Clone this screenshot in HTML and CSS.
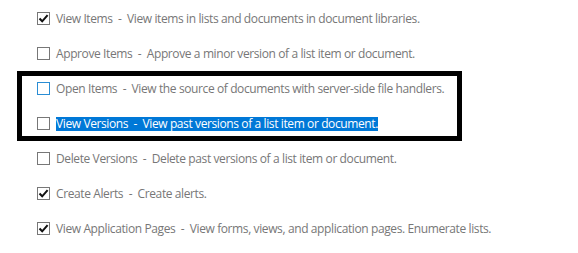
FILE: index.html
```html
<!DOCTYPE html>
<html>
<head>
<meta charset="utf-8">
<link rel="stylesheet" href="styles.css">
</head>
<body>
<div class="perm-list">
  <div class="row">
    <span class="cb checked"><svg viewBox="0 0 13 13" width="13" height="13"><path d="M2.5 6.5 L5.2 9.3 L10.6 3.2" fill="none" stroke="#111" stroke-width="2"/></svg></span>
    <span class="label">View Items&nbsp;&nbsp;-&nbsp;&nbsp;View items in lists and documents in document libraries.</span>
  </div>
  <div class="row">
    <span class="cb"></span>
    <span class="label">Approve Items&nbsp;&nbsp;-&nbsp;&nbsp;Approve a minor version of a list item or document.</span>
  </div>
  <div class="row">
    <span class="cb hover"></span>
    <span class="label">Open Items&nbsp;&nbsp;-&nbsp;&nbsp;View the source of documents with server-side file handlers.</span>
  </div>
  <div class="row">
    <span class="cb"></span>
    <span class="label selected">View Versions&nbsp;&nbsp;-&nbsp;&nbsp;View past versions of a list item or document.</span>
  </div>
  <div class="row">
    <span class="cb"></span>
    <span class="label">Delete Versions&nbsp;&nbsp;-&nbsp;&nbsp;Delete past versions of a list item or document.</span>
  </div>
  <div class="row">
    <span class="cb checked"><svg viewBox="0 0 13 13" width="13" height="13"><path d="M2.5 6.5 L5.2 9.3 L10.6 3.2" fill="none" stroke="#111" stroke-width="2"/></svg></span>
    <span class="label">Create Alerts&nbsp;&nbsp;-&nbsp;&nbsp;Create alerts.</span>
  </div>
  <div class="row">
    <span class="cb checked"><svg viewBox="0 0 13 13" width="13" height="13"><path d="M2.5 6.5 L5.2 9.3 L10.6 3.2" fill="none" stroke="#111" stroke-width="2"/></svg></span>
    <span class="label">View Application Pages&nbsp;&nbsp;-&nbsp;&nbsp;View forms, views, and application pages. Enumerate lists.</span>
  </div>
  <div class="annotation"></div>
</div>
</body>
</html>
```

FILE: styles.css
```css
html, body {
  margin: 0;
  padding: 0;
  background: #fff;
}
.perm-list {
  position: relative;
  padding-top: 1px;
  padding-left: 37px;
  font-family: "Open Sans", "Noto Sans", sans-serif;
  font-size: 12px;
  letter-spacing: -0.39px;
  color: #777;
}
.row {
  display: flex;
  align-items: center;
  height: 35px;
  gap: 6px;
  white-space: nowrap;
}
.cb {
  box-sizing: border-box;
  width: 13px;
  height: 13px;
  border: 1px solid #777;
  background: #fff;
  flex: none;
  position: relative;
}
.cb svg {
  position: absolute;
  left: -1px;
  top: -1px;
}
.cb.hover {
  border-color: #2a8dd4;
}
.label {
  display: inline-block;
  line-height: 14px;
}
.label.selected {
  background: #0078d7;
  color: #fff;
}
.annotation {
  position: absolute;
  left: 17px;
  top: 71px;
  width: 445px;
  height: 70px;
  box-sizing: border-box;
  border: 5px solid #000;
  pointer-events: none;
}
```
